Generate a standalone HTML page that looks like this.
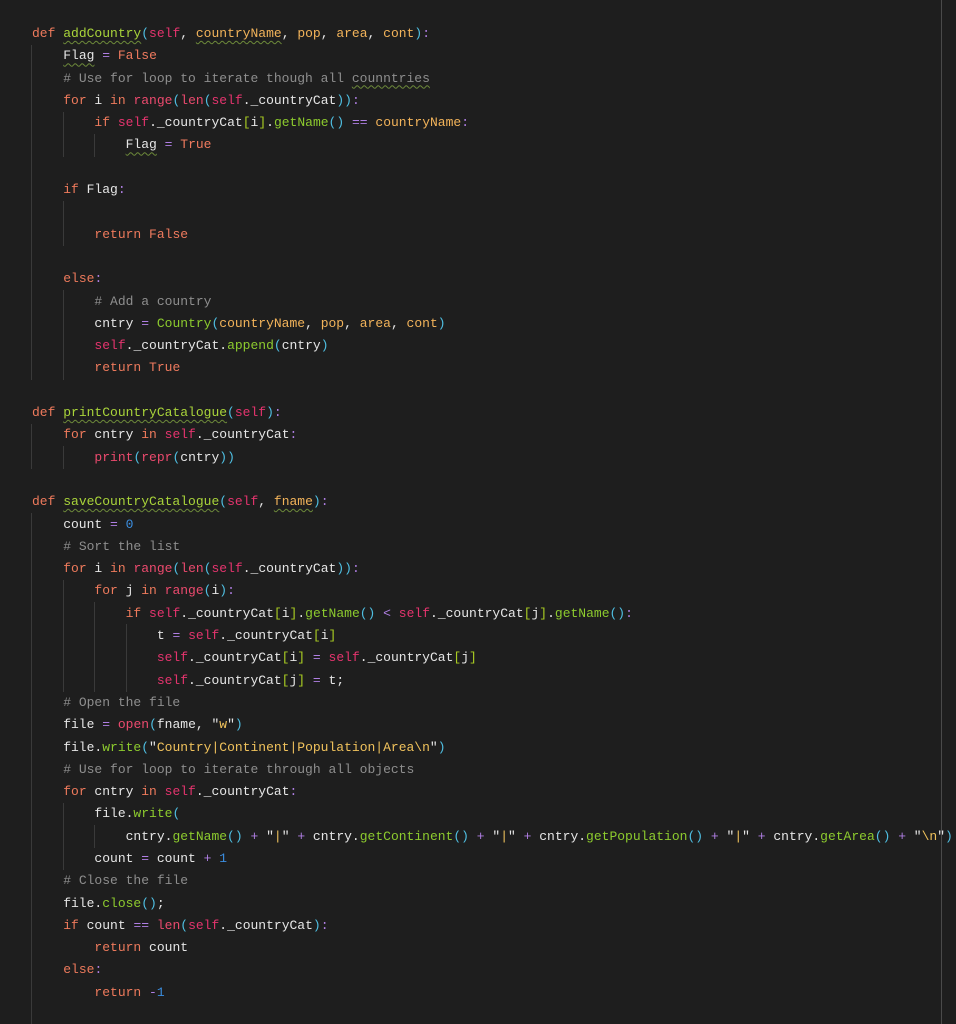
<!DOCTYPE html>
<html><head><meta charset="utf-8"><style>
html,body{margin:0;padding:0;background:#1e1e1e;width:956px;height:1024px;overflow:hidden;position:relative}
pre{position:absolute;left:32px;top:23px;margin:0;font-family:"Liberation Mono",monospace;font-size:13px;line-height:22.3px;color:#e6e6e6;white-space:pre}
.k{color:#ee7a5c}.s{color:#e5346e}.p{color:#f2b35a}.f{color:#8dcb2e}.fn{color:#a9d43a}
.b{color:#ec4a6e}.c{color:#ef7a5e}.o{color:#b07fe4}.pa{color:#4fbfe2}.br{color:#a9cc22}
.cm{color:#8e8e8e}.n{color:#3b8ee0}.st{color:#f0c25c}
.w{text-decoration:underline wavy #6d8a3a;text-decoration-thickness:1px;text-underline-offset:3px}
.g{position:absolute;width:1px;background:#3a3a3a}
.rv{position:absolute;left:941px;top:0;width:1px;height:1024px;background:#4a4a4a}
</style></head><body>
<div class="rv"></div>
<div class="g" style="left:31px;top:45px;height:335px"></div>
<div class="g" style="left:63px;top:112px;height:45px"></div>
<div class="g" style="left:94px;top:134px;height:23px"></div>
<div class="g" style="left:63px;top:201px;height:45px"></div>
<div class="g" style="left:63px;top:290px;height:90px"></div>
<div class="g" style="left:31px;top:424px;height:45px"></div>
<div class="g" style="left:63px;top:446px;height:23px"></div>
<div class="g" style="left:31px;top:513px;height:511px"></div>
<div class="g" style="left:63px;top:580px;height:112px"></div>
<div class="g" style="left:94px;top:602px;height:90px"></div>
<div class="g" style="left:126px;top:624px;height:68px"></div>
<div class="g" style="left:63px;top:803px;height:67px"></div>
<div class="g" style="left:94px;top:825px;height:23px"></div>
<pre><span class="k">def</span> <span class="fn w">addCountry</span><span class="pa">(</span><span class="s">self</span>, <span class="p w">countryName</span>, <span class="p">pop</span>, <span class="p">area</span>, <span class="p">cont</span><span class="pa">)</span><span class="o">:</span>
    <span class="w">Flag</span> <span class="o">=</span> <span class="c">False</span>
    <span class="cm"># Use for loop to iterate though all <span class="w">counntries</span></span>
    <span class="k">for</span> i <span class="k">in</span> <span class="b">range</span><span class="pa">(</span><span class="b">len</span><span class="pa">(</span><span class="s">self</span>._countryCat<span class="pa">))</span><span class="o">:</span>
        <span class="k">if</span> <span class="s">self</span>._countryCat<span class="br">[</span>i<span class="br">]</span>.<span class="f">getName</span><span class="pa">()</span> <span class="o">==</span> <span class="p">countryName</span><span class="o">:</span>
            <span class="w">Flag</span> <span class="o">=</span> <span class="c">True</span>

    <span class="k">if</span> Flag<span class="o">:</span>

        <span class="k">return</span> <span class="c">False</span>

    <span class="k">else</span><span class="o">:</span>
        <span class="cm"># Add a country</span>
        cntry <span class="o">=</span> <span class="f">Country</span><span class="pa">(</span><span class="p">countryName</span>, <span class="p">pop</span>, <span class="p">area</span>, <span class="p">cont</span><span class="pa">)</span>
        <span class="s">self</span>._countryCat.<span class="f">append</span><span class="pa">(</span>cntry<span class="pa">)</span>
        <span class="k">return</span> <span class="c">True</span>

<span class="k">def</span> <span class="fn w">printCountryCatalogue</span><span class="pa">(</span><span class="s">self</span><span class="pa">)</span><span class="o">:</span>
    <span class="k">for</span> cntry <span class="k">in</span> <span class="s">self</span>._countryCat<span class="o">:</span>
        <span class="b">print</span><span class="pa">(</span><span class="b">repr</span><span class="pa">(</span>cntry<span class="pa">))</span>

<span class="k">def</span> <span class="fn w">saveCountryCatalogue</span><span class="pa">(</span><span class="s">self</span>, <span class="p w">fname</span><span class="pa">)</span><span class="o">:</span>
    count <span class="o">=</span> <span class="n">0</span>
    <span class="cm"># Sort the list</span>
    <span class="k">for</span> i <span class="k">in</span> <span class="b">range</span><span class="pa">(</span><span class="b">len</span><span class="pa">(</span><span class="s">self</span>._countryCat<span class="pa">))</span><span class="o">:</span>
        <span class="k">for</span> j <span class="k">in</span> <span class="b">range</span><span class="pa">(</span>i<span class="pa">)</span><span class="o">:</span>
            <span class="k">if</span> <span class="s">self</span>._countryCat<span class="br">[</span>i<span class="br">]</span>.<span class="f">getName</span><span class="pa">()</span> <span class="o">&lt;</span> <span class="s">self</span>._countryCat<span class="br">[</span>j<span class="br">]</span>.<span class="f">getName</span><span class="pa">()</span><span class="o">:</span>
                t <span class="o">=</span> <span class="s">self</span>._countryCat<span class="br">[</span>i<span class="br">]</span>
                <span class="s">self</span>._countryCat<span class="br">[</span>i<span class="br">]</span> <span class="o">=</span> <span class="s">self</span>._countryCat<span class="br">[</span>j<span class="br">]</span>
                <span class="s">self</span>._countryCat<span class="br">[</span>j<span class="br">]</span> <span class="o">=</span> t;
    <span class="cm"># Open the file</span>
    file <span class="o">=</span> <span class="b">open</span><span class="pa">(</span>fname, "<span class="st">w</span>"<span class="pa">)</span>
    file.<span class="f">write</span><span class="pa">(</span>"<span class="st">Country|Continent|Population|Area\n</span>"<span class="pa">)</span>
    <span class="cm"># Use for loop to iterate through all objects</span>
    <span class="k">for</span> cntry <span class="k">in</span> <span class="s">self</span>._countryCat<span class="o">:</span>
        file.<span class="f">write</span><span class="pa">(</span>
            cntry.<span class="f">getName</span><span class="pa">()</span> <span class="o">+</span> "<span class="st">|</span>" <span class="o">+</span> cntry.<span class="f">getContinent</span><span class="pa">()</span> <span class="o">+</span> "<span class="st">|</span>" <span class="o">+</span> cntry.<span class="f">getPopulation</span><span class="pa">()</span> <span class="o">+</span> "<span class="st">|</span>" <span class="o">+</span> cntry.<span class="f">getArea</span><span class="pa">()</span> <span class="o">+</span> "<span class="st">\n</span>"<span class="pa">)</span>
        count <span class="o">=</span> count <span class="o">+</span> <span class="n">1</span>
    <span class="cm"># Close the file</span>
    file.<span class="f">close</span><span class="pa">()</span>;
    <span class="k">if</span> count <span class="o">==</span> <span class="b">len</span><span class="pa">(</span><span class="s">self</span>._countryCat<span class="pa">)</span><span class="o">:</span>
        <span class="k">return</span> count
    <span class="k">else</span><span class="o">:</span>
        <span class="k">return</span> <span class="o">-</span><span class="n">1</span>
</pre>
</body></html>
